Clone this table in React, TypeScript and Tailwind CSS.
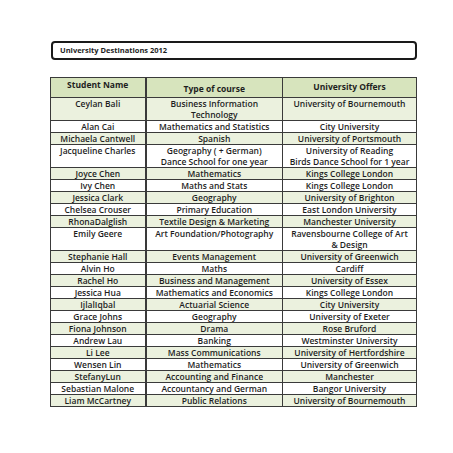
import React from 'react';

type Row = { name: string; course: string; uni: string; shaded: boolean };

const rows: Row[] = [
  { name: 'Ceylan Bali', course: 'Business Information\nTechnology', uni: 'University of Bournemouth', shaded: true },
  { name: 'Alan Cai', course: 'Mathematics and Statistics', uni: 'City University', shaded: false },
  { name: 'Michaela Cantwell', course: 'Spanish', uni: 'University of Portsmouth', shaded: true },
  { name: 'Jacqueline Charles', course: 'Geography ( + German)\nDance School for one year', uni: 'University of Reading\nBirds Dance School for 1 year', shaded: false },
  { name: 'Joyce Chen', course: 'Mathematics', uni: 'Kings College London', shaded: true },
  { name: 'Ivy Chen', course: 'Maths and Stats', uni: 'Kings College London', shaded: false },
  { name: 'Jessica Clark', course: 'Geography', uni: 'University of Brighton', shaded: true },
  { name: 'Chelsea Crouser', course: 'Primary Education', uni: 'East London University', shaded: false },
  { name: 'RhonaDalglish', course: 'Textile Design & Marketing', uni: 'Manchester University', shaded: true },
  { name: 'Emily Geere', course: 'Art Foundation/Photography', uni: 'Ravensbourne College of Art\n& Design', shaded: false },
  { name: 'Stephanie Hall', course: 'Events Management', uni: 'University of Greenwich', shaded: true },
  { name: 'Alvin Ho', course: 'Maths', uni: 'Cardiff', shaded: false },
  { name: 'Rachel Ho', course: 'Business and Management', uni: 'University of Essex', shaded: true },
  { name: 'Jessica Hua', course: 'Mathematics and  Economics', uni: 'Kings College London', shaded: false },
  { name: 'IjlalIqbal', course: 'Actuarial Science', uni: 'City University', shaded: true },
  { name: 'Grace Johns', course: 'Geography', uni: 'University of Exeter', shaded: false },
  { name: 'Fiona Johnson', course: 'Drama', uni: 'Rose Bruford', shaded: true },
  { name: 'Andrew Lau', course: 'Banking', uni: 'Westminster  University', shaded: false },
  { name: 'Li Lee', course: 'Mass Communications', uni: 'University of Hertfordshire', shaded: true },
  { name: 'Wensen Lin', course: 'Mathematics', uni: 'University of Greenwich', shaded: false },
  { name: 'StefanyLun', course: 'Accounting and Finance', uni: 'Manchester', shaded: true },
  { name: 'Sebastian  Malone', course: 'Accountancy and German', uni: 'Bangor University', shaded: false },
  { name: 'Liam McCartney', course: 'Public Relations', uni: 'University of Bournemouth', shaded: true },
];

export default function App() {
  return (
    <div
      className="w-[453px] h-[453px] bg-white pt-[41px] pl-[50px] text-[#1e1e1e]"
      style={{ fontFamily: '"Open Sans", "Liberation Sans", sans-serif' }}
    >
      {/* title box */}
      <div className="ml-px w-[366px] h-[19px] border-2 border-[#1a1a1a] rounded-[4px] flex items-center pl-[7px]">
        <span className="text-[7.5px] font-bold leading-none">University Destinations 2012</span>
      </div>

      <table className="mt-[17px] w-[366px] border-collapse border-[1.5px] border-[#3a3a3a] text-[8.5px] font-semibold leading-[11px] text-center table-fixed">
        <colgroup>
          <col className="w-[95px]" />
          <col className="w-[137px]" />
          <col className="w-[134px]" />
        </colgroup>
        <thead>
          <tr className="bg-[#d7e4bd] h-[20px]">
            <th className="border border-[#3a3a3a] border-r-2 align-top pt-px font-bold">Student Name</th>
            <th className="border border-[#3a3a3a] align-top pt-[5px] font-bold">Type of course</th>
            <th className="border border-[#3a3a3a] align-top pt-[3px] font-bold">University Offers</th>
          </tr>
        </thead>
        <tbody>
          {rows.map((r) => (
            <tr key={r.name} className={r.shaded ? 'bg-[#ebf1de]' : 'bg-white'}>
              <td className="border border-[#3a3a3a] border-r-2 align-top p-0 whitespace-nowrap">{r.name}</td>
              <td className="border border-[#3a3a3a] align-top p-0 whitespace-pre-line">{r.course}</td>
              <td className="border border-[#3a3a3a] align-top p-0 whitespace-pre-line">{r.uni}</td>
            </tr>
          ))}
        </tbody>
      </table>
    </div>
  );
}
